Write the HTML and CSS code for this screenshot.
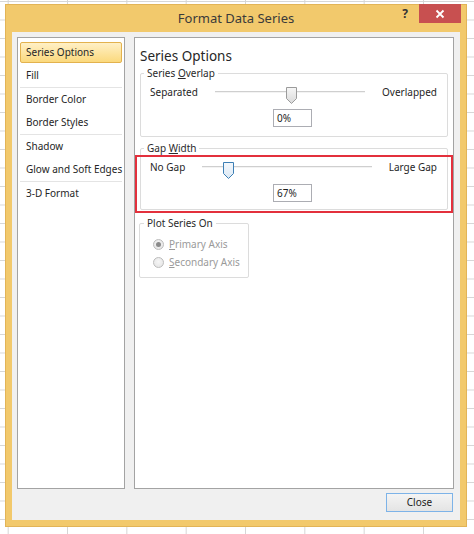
FILE: index.html
```html
<!DOCTYPE html>
<html>
<head>
<meta charset="utf-8">
<link rel="stylesheet" href="styles.css">
</head>
<body>
<div class="dialog">
  <div class="titlebar">
    <span></span>
    <span class="title">Format Data Series</span>
    <div class="controls">
      <span class="help">?</span>
      <span class="close-x"><svg width="10" height="10" viewBox="0 0 10 10"><path d="M1.5 1.5 L8.5 8.5 M8.5 1.5 L1.5 8.5" stroke="#fff" stroke-width="1.8" fill="none"/></svg></span>
    </div>
  </div>
  <div class="body">
    <div class="panes">
      <div class="nav">
        <div class="nav-item selected">Series Options</div>
        <div class="nav-item">Fill</div>
        <div class="nav-sep"></div>
        <div class="nav-item">Border Color</div>
        <div class="nav-item">Border Styles</div>
        <div class="nav-sep"></div>
        <div class="nav-item">Shadow</div>
        <div class="nav-item">Glow and Soft Edges</div>
        <div class="nav-sep"></div>
        <div class="nav-item">3-D Format</div>
      </div>
      <div class="content">
        <div class="heading">Series Options</div>

        <div class="group">
          <div class="legend">Series <u>O</u>verlap</div>
          <div class="slider-row">
            <span>Separated</span>
            <div class="track">
              <svg class="thumb" style="left:50.5%" width="11" height="17" viewBox="0 0 11 17"><defs><linearGradient id="g1" x1="0" y1="0" x2="0" y2="1"><stop offset="0" stop-color="#f7f7f7"/><stop offset="1" stop-color="#d9d9d9"/></linearGradient></defs><path d="M0.5 0.5 H10.5 V11.5 L5.5 16.5 L0.5 11.5 Z" fill="url(#g1)" stroke="#9b9b9b"/></svg>
            </div>
            <span>Overlapped</span>
          </div>
          <div class="value-box">0%</div>
        </div>

        <div class="group gap-group">
          <div class="legend">Gap <u>W</u>idth</div>
          <div class="slider-row">
            <span>No Gap</span>
            <div class="track">
              <svg class="thumb" style="left:15.4%" width="11" height="17" viewBox="0 0 11 17"><defs><linearGradient id="g2" x1="0" y1="0" x2="0" y2="1"><stop offset="0" stop-color="#f4f8fc"/><stop offset="1" stop-color="#dce9f5"/></linearGradient></defs><path d="M0.5 0.5 H10.5 V11.5 L5.5 16.5 L0.5 11.5 Z" fill="url(#g2)" stroke="#3c7fb5"/></svg>
            </div>
            <span>Large Gap</span>
          </div>
          <div class="value-box">67%</div>
          <div class="highlight"></div>
        </div>

        <div class="group plot-group">
          <div class="legend">Plot Series On</div>
          <div class="radio-row"><span class="radio checked"></span><span><u>P</u>rimary Axis</span></div>
          <div class="radio-row"><span class="radio"></span><span><u>S</u>econdary Axis</span></div>
        </div>
      </div>
    </div>
    <div class="footer">
      <button class="btn">Close</button>
    </div>
  </div>
</div>
</body>
</html>
```

FILE: styles.css
```css
html, body {
  margin: 0;
  padding: 0;
}
body {
  width: 474px;
  height: 534px;
  overflow: hidden;
  background-color: #ffffff;
  background-image:
    linear-gradient(to right, #d6d6d6 1px, transparent 1px),
    linear-gradient(to bottom, #d6d6d6 1px, transparent 1px);
  background-size: 59.33px 100%, 100% 18.5px;
  background-position: 7.7px 0, 0 1px;
  font-family: "Noto Sans", "Open Sans", sans-serif;
  font-size: 10px;
  color: #1f1f1f;
}
.dialog {
  margin: 4px 0 0 5px;
  width: 462px;
  height: 523px;
  box-sizing: border-box;
  background: #f2c96c;
  border: 1px solid #e2b457;
  display: flex;
  flex-direction: column;
}
.titlebar {
  height: 27px;
  display: grid;
  grid-template-columns: 1fr auto 1fr;
  align-items: start;
}
.title {
  font-size: 13px;
  line-height: 26px;
  color: #3a3a3a;
}
.controls {
  display: flex;
  justify-content: flex-end;
  align-items: flex-start;
  margin-right: 5px;
  margin-top: -1px;
}
.help {
  font-weight: bold;
  font-size: 12px;
  line-height: 18px;
  color: #333;
  margin-right: 11px;
  margin-top: 1px;
}
.close-x {
  width: 42px;
  height: 19px;
  background: #c85050;
  display: flex;
  align-items: center;
  justify-content: center;
}
.close-x svg {
  display: block;
}
.body {
  margin: 0 6px 6px 6px;
  flex: 1;
  background: #f0f0f0;
  box-sizing: border-box;
  padding: 5px 6px 8px 5px;
  display: flex;
  flex-direction: column;
}
.panes {
  display: flex;
  gap: 9px;
  height: 452px;
}
.nav {
  width: 108px;
  box-sizing: border-box;
  background: #fff;
  border: 1px solid #a3a3a3;
  padding-top: 4px;
  display: flex;
  flex-direction: column;
}
.nav-item {
  height: 21px;
  line-height: 21px;
  margin: 1px 2px;
  padding-left: 6px;
  box-sizing: border-box;
  white-space: nowrap;
  color: #262626;
}
.nav-item.selected {
  background: linear-gradient(#fff0c6, #fbd97d);
  border: 1px solid #e3b24e;
  border-radius: 2px;
  padding-left: 5px;
  line-height: 19px;
  margin-top: 0;
}
.nav-sep {
  height: 1px;
  background: #e4e4e4;
  margin: 0 2px;
}
.content {
  flex: 1;
  box-sizing: border-box;
  background: #fff;
  border: 1px solid #a3a3a3;
}
.heading {
  font-size: 13.5px;
  line-height: 20px;
  margin: 8px 0 0 5px;
  color: #262626;
}
.group {
  position: relative;
  border: 1px solid #dcdcdc;
  border-radius: 2px;
  margin: 7px 5px 0 5px;
  padding: 0 10px 9px 9px;
}
.legend {
  width: fit-content;
  margin: -8px 0 0 -6px;
  padding: 0 3px;
  background: #fff;
  line-height: 14px;
  color: #2a2a2a;
}
.slider-row {
  display: flex;
  align-items: center;
  gap: 17px;
  height: 18px;
  margin-top: 3px;
  white-space: nowrap;
}
.track {
  flex: 1;
  height: 18px;
  position: relative;
}
.track::before {
  content: "";
  position: absolute;
  left: 0;
  right: 0;
  top: 8px;
  height: 1px;
  background: #cfcfcf;
  border-bottom: 1px solid #f3f3f3;
}
.thumb {
  position: absolute;
  top: 4px;
  margin-left: -5px;
  display: block;
}
.value-box {
  width: 39px;
  height: 18px;
  box-sizing: border-box;
  border: 1px solid #acadb3;
  margin: 8px auto 0;
  padding-left: 3px;
  line-height: 16px;
  background: #fff;
  position: relative;
  left: -1px;
}
.gap-group {
  margin-top: 11px;
  padding-bottom: 7px;
}
.highlight {
  position: absolute;
  left: -6px;
  right: -6px;
  top: 6px;
  bottom: -4px;
  border: 2px solid #e3303c;
  pointer-events: none;
}
.plot-group {
  margin: 13px 0 0 4px;
  width: 110px;
  box-sizing: border-box;
  padding: 0 4px 6px 13px;
}
.plot-group .legend {
  margin-left: -9px;
}
.radio-row {
  display: flex;
  align-items: center;
  height: 18px;
  gap: 5px;
  color: #9a9a9a;
  white-space: nowrap;
}
.plot-group .legend + .radio-row {
  margin-top: 5px;
}
.radio {
  width: 11px;
  height: 11px;
  box-sizing: border-box;
  border-radius: 50%;
  border: 1px solid #bcbcbc;
  background: radial-gradient(circle at 50% 40%, #f6f6f6, #e2e2e2);
  display: flex;
  align-items: center;
  justify-content: center;
}
.radio.checked::after {
  content: "";
  width: 5px;
  height: 5px;
  border-radius: 50%;
  background: #8a8a8a;
}
.footer {
  display: flex;
  justify-content: flex-end;
  padding-top: 4px;
}
.btn {
  width: 67px;
  height: 19px;
  margin-right: 1px;
  box-sizing: border-box;
  border: 1px solid #7db3e8;
  background: linear-gradient(#f4f4f4, #e4e4e4);
  font-family: "Noto Sans", "Open Sans", sans-serif;
  font-size: 10px;
  color: #222;
  padding: 0;
  line-height: 17px;
}
```
